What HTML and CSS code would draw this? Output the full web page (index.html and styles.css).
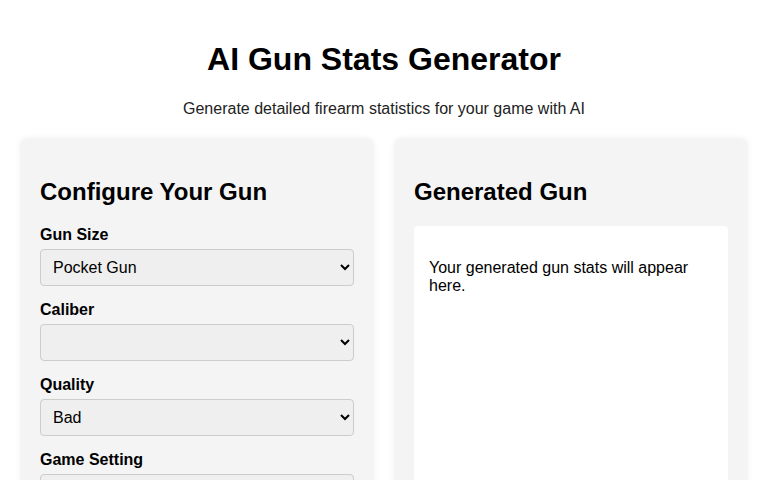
FILE: index.html
```html
<!DOCTYPE html>
<html lang="en">
<head>
<meta charset="utf-8">
<title>AI Gun Stats Generator</title>
<link rel="stylesheet" href="styles.css">
</head>
<body>
<div class="container">
  <h1>AI Gun Stats Generator</h1>
  <p class="subtitle">Generate detailed firearm statistics for your game with AI</p>
  <div class="grid">
    <div class="card">
      <h2>Configure Your Gun</h2>
      <div class="group">
        <label for="size">Gun Size</label>
        <select id="size"><option>Pocket Gun</option><option>Pistol</option><option>Rifle</option></select>
      </div>
      <div class="group">
        <label for="caliber">Caliber</label>
        <select id="caliber"><option></option></select>
      </div>
      <div class="group">
        <label for="quality">Quality</label>
        <select id="quality"><option>Bad</option><option>Average</option><option>Good</option></select>
      </div>
      <div class="group">
        <label for="setting">Game Setting</label>
        <select id="setting"><option>Modern</option></select>
      </div>
    </div>
    <div class="card">
      <h2>Generated Gun</h2>
      <div class="output">
        <p>Your generated gun stats will appear here.</p>
      </div>
    </div>
  </div>
</div>
</body>
</html>
```
FILE: styles.css
```css
body {
  margin: 0;
  font-family: "Liberation Sans", Arial, sans-serif;
  color: #000;
  background: #fff;
}
.container {
  padding: 20px;
}
h1 {
  text-align: center;
  font-size: 32px;
  margin: 21px 0 22px;
}
.subtitle {
  text-align: center;
  margin: 0 0 20px;
  color: #222;
}
.grid {
  display: grid;
  grid-template-columns: 1fr 1fr;
  gap: 20px;
}
.card {
  background: #f4f4f4;
  border-radius: 8px;
  padding: 20px;
  box-shadow: 0 0 6px rgba(0, 0, 0, 0.06);
  min-height: 400px;
}
h2 {
  font-size: 24px;
  margin: 20px 0;
}
.group {
  margin-bottom: 15px;
}
label {
  display: block;
  font-weight: bold;
  margin-bottom: 5px;
}
select {
  display: block;
  width: 100%;
  padding: 8px;
  font-family: "Liberation Sans", Arial, sans-serif;
  font-size: 16px;
  border: 1px solid #ccc;
  border-radius: 4px;
  background-color: #efefef;
  color: #000;
}
.output {
  background: #fff;
  border-radius: 4px;
  padding: 15px;
  min-height: 300px;
}
.output p {
  margin: 18px 0 16px;
}
```
